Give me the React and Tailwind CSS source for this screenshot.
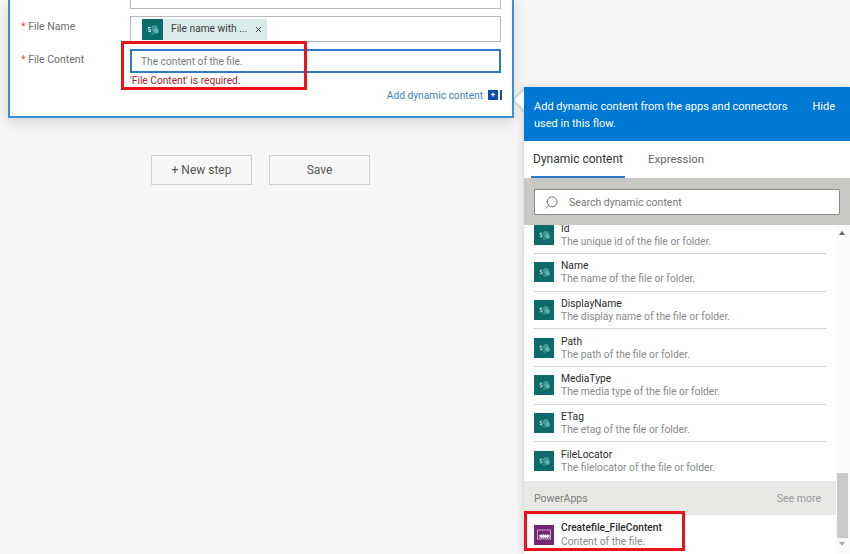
import { Search, X } from 'lucide-react';

const FONT = "font-['Roboto','Noto_Sans',sans-serif]";

const fields = [
  { name: 'Id', desc: 'The unique id of the file or folder.' },
  { name: 'Name', desc: 'The name of the file or folder.' },
  { name: 'DisplayName', desc: 'The display name of the file or folder.' },
  { name: 'Path', desc: 'The path of the file or folder.' },
  { name: 'MediaType', desc: 'The media type of the file or folder.' },
  { name: 'ETag', desc: 'The etag of the file or folder.' },
  { name: 'FileLocator', desc: 'The filelocator of the file or folder.' },
];

function SharePointIcon({ size = 'w-[20px] h-[20px]' }) {
  return (
    <div className={`${size} bg-[#0b6a6a] shrink-0`}>
      <svg viewBox="0 0 20 20" className="w-full h-full">
        <circle cx="12" cy="9" r="3" fill="#3f9a96" />
        <circle cx="13.5" cy="11.5" r="2.4" fill="#5bb3ad" />
        <circle cx="10.5" cy="13.5" r="1.8" fill="#2f8a86" />
        <path d="M8.2 8.4c-1-.6-2.3-.3-2.3.6 0 1.1 2.4.8 2.4 1.9 0 1-1.4 1.2-2.5.6" fill="none" stroke="#d8f0ee" strokeWidth="1" />
      </svg>
    </div>
  );
}

function PowerAppsIcon() {
  return (
    <div className="w-[20px] h-[20px] bg-[#742774] shrink-0">
      <svg viewBox="0 0 20 20" className="w-full h-full">
        <rect x="3.5" y="5" width="13" height="9" fill="none" stroke="#c9a6c9" strokeWidth="1" />
        <path d="M5.5 12.5l2-2.5 2 2.5 2-2.5 2 2.5 2-2.5" fill="none" stroke="#fff" strokeWidth="1.2" />
        <path d="M5.5 10l2 2.5 2-2.5 2 2.5 2-2.5 2 2.5" fill="none" stroke="#fff" strokeWidth="1.2" />
      </svg>
    </div>
  );
}

function FieldRow({ item, last }) {
  return (
    <div className={`h-[37.67px] shrink-0 flex items-center gap-[7px] ${last ? '' : 'border-b border-[#d4d4d4]'}`}>
      <SharePointIcon />
      <div className="min-w-0 pt-[1px]">
        <div className="text-[10.3px] leading-[13px] text-[#2b2b2b]">{item.name}</div>
        <div className="text-[10.3px] leading-[14px] text-[#8a8a8a]">{item.desc}</div>
      </div>
    </div>
  );
}

function FlowCard() {
  return (
    <div className="relative ml-2 w-[506px] h-[118px] bg-white border-b-2 border-x-2 border-[#3f8fd0] shadow-[0_4px_12px_rgba(0,0,0,0.14)] pl-[120px] pr-[11px]">
      {/* previous input, mostly scrolled off */}
      <div className="h-[9px] border border-t-0 border-[#b8b8b8]" />

      <div className="relative mt-[7px] h-[26px] border border-[#b8b8b8] flex items-center pl-[11px]">
        <span className="absolute left-[-110px] top-[2px] text-[10.5px] text-[#6d6d6d]">
          <span className="text-[#d9534f]">* </span>File Name
        </span>
        <div className="flex items-center h-[21px] bg-[#d9ebe9] pr-[4px]">
          <SharePointIcon size="w-[21px] h-[21px]" />
          <span className="ml-2 text-[10.2px] text-[#3c3c3c]">File name with ...</span>
          <X className="ml-[7px] w-[9px] h-[9px] text-[#333]" strokeWidth={2.5} />
        </div>
      </div>

      <div className="relative mt-[7px] h-[24px] border-2 border-[#2f79c9] flex items-center pl-[9px] pt-[2px]">
        <span className="absolute left-[-111px] top-[1px] text-[10.5px] text-[#6d6d6d]">
          <span className="text-[#d9534f]">* </span>File Content
        </span>
        <span className="text-[10.2px] text-[#7a7a7a]">The content of the file.</span>
      </div>

      <div className="text-[10.2px] leading-[14px] pt-[1px] h-[15px] text-[#a4262c]">'File Content' is required.</div>

      <div className="flex items-center justify-end h-[16px] -mr-[1px]">
        <span className="text-[10.2px] text-[#3b83c0]">Add dynamic content</span>
        <span className="ml-[5px] flex items-center gap-[2px] h-[10px] -translate-y-[1px]">
          <span className="w-[10px] h-[10px] bg-[#0f4fa8] flex items-center justify-center text-white text-[8px] leading-none font-bold">+</span>
          <span className="w-[2px] h-[10px] bg-[#0f4fa8]" />
        </span>
      </div>
    </div>
  );
}

function DynamicPanel() {
  return (
    <div className="relative w-[326px] h-[467px] mt-[87px] bg-white flex flex-col shadow-[-2px_0_6px_rgba(0,0,0,0.12)]">
      <div className="absolute left-[-6px] top-[4px] w-[18px] h-[18px] rotate-45 bg-white shadow-[-1px_1px_3px_rgba(0,0,0,0.18)]" />
      <div className="relative h-[54px] bg-[#0078d4] text-white text-[11px] leading-[17px] pl-[10px] pt-[11px] pr-[15px] flex justify-between">
        <span className="w-[270px]">Add dynamic content from the apps and connectors used in this flow.</span>
        <span>Hide</span>
      </div>

      <div className="h-[37px] flex items-start pl-[7px] pt-[0px]">
        <div className="h-[37px] px-[2px] pt-[1px] flex items-center border-b-2 border-[#2f79c9] text-[12px] text-[#333]">Dynamic content</div>
        <div className="h-[37px] ml-[23px] pt-[1px] flex items-center text-[11.5px] text-[#666]">Expression</div>
      </div>

      <div className="h-[47px] bg-[#c8c8c4] px-[10px] pt-[11px]">
        <div className="h-[26px] bg-white border border-[#8a8a8a] rounded-[1px] flex items-center pl-[9px]">
          <Search className="w-[15px] h-[15px] text-[#555] -scale-x-100" strokeWidth={1.25} />
          <span className="ml-[10px] pt-[1px] text-[10.5px] text-[#777]">Search dynamic content</span>
        </div>
      </div>

      <div className="relative flex-1 overflow-hidden">
        {/* scrollbar */}
        <div className="absolute inset-y-0 right-0 w-[14px] bg-[#fafafa]">
          <svg viewBox="0 0 6 4" className="absolute left-[3px] top-[6px] w-[6px] h-[4px]">
            <path d="M0 4l3-4 3 4z" fill="#666" />
          </svg>
          <div className="absolute left-[1px] w-[11px] top-[248px] h-[65px] bg-[#c9c9c9]" />
          <svg viewBox="0 0 6 4" className="absolute left-[3px] top-[317px] w-[6px] h-[4px]">
            <path d="M0 0l3 4 3-4z" fill="#aaa" />
          </svg>
        </div>

        <div className="pr-[14px]">
          <div className="pl-[10px] pr-[10px] -mt-[8.5px] flex flex-col">
            {fields.map((item, i) => (
              <FieldRow key={item.name} item={item} last={i === fields.length - 1} />
            ))}
          </div>
          <div className="mt-[1px] h-[34px] pt-[2px] bg-[#e8e9e5] flex items-center justify-between pl-[10px] pr-[15px] text-[10.5px] text-[#7d7d7d]">
            <span>PowerApps</span>
            <span className="text-[#9a9a9a]">See more</span>
          </div>
          <div className="h-[39px] pl-[10px] flex items-center gap-[7px]">
            <PowerAppsIcon />
            <div>
              <div className="text-[10.2px] leading-[14px] font-medium text-[#2b2b2b]">Createfile_FileContent</div>
              <div className="text-[10.3px] leading-[13px] text-[#8a8a8a]">Content of the file.</div>
            </div>
          </div>
        </div>
      </div>
    </div>
  );
}

export default function App() {
  return (
    <div className={`relative w-[850px] h-[554px] overflow-hidden bg-[#f6f6f6] flex ${FONT}`}>
      <div className="w-[524px] shrink-0">
        <FlowCard />
        <div className="mt-[37px] pl-[151px] flex gap-[17px] text-[12px] text-[#555]">
          <div className="w-[101px] h-[30px] bg-[#f6f6f6] border border-[#cfcfcf] flex items-center justify-center">+ New step</div>
          <div className="w-[101px] h-[30px] bg-[#f6f6f6] border border-[#cfcfcf] flex items-center justify-center">Save</div>
        </div>
      </div>
      <DynamicPanel />

      {/* red annotation boxes */}
      <div className="absolute left-[121px] top-[41px] w-[186px] h-[49px] border-[3px] border-[#e8141c]" />
      <div className="absolute left-[524px] top-[511px] w-[161px] h-[40px] border-[3px] border-[#e8141c]" />
    </div>
  );
}
